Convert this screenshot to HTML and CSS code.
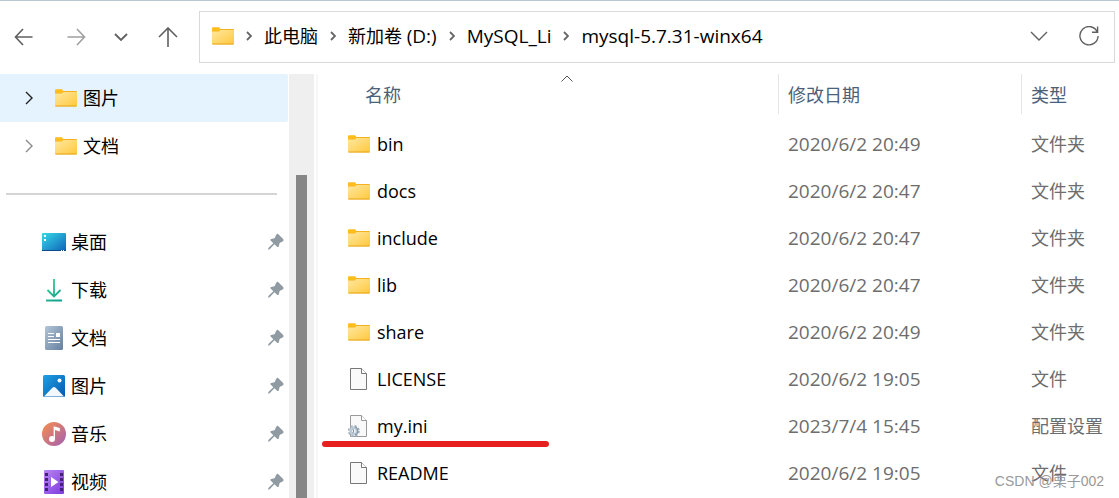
FILE: index.html
```html
<!DOCTYPE html>
<html lang="zh-CN">
<head>
    <meta charset="UTF-8">
    <meta name="viewport" content="width=device-width, initial-scale=1.0">
    <title>mysql-5.7.31-winx64</title>
    <link rel="stylesheet" href="styles.css">
</head>
<body>
    <!-- shared icons -->
    <svg class="defs" width="0" height="0" aria-hidden="true">
        <defs>
            <linearGradient id="g-folder" x1="0" y1="0" x2="1" y2="1">
                <stop offset="0" stop-color="#ffe8a0"/><stop offset="1" stop-color="#ffc83d"/>
            </linearGradient>
            <linearGradient id="g-desktop" x1="0" y1="0" x2="1" y2="1">
                <stop offset="0" stop-color="#36dbe8"/><stop offset="1" stop-color="#0f62b8"/>
            </linearGradient>
            <linearGradient id="g-download" x1="0" y1="0" x2="1" y2="1" gradientUnits="userSpaceOnUse" gradientTransform="scale(24)">
                <stop offset="0.2" stop-color="#33d08c"/><stop offset="1" stop-color="#0a9396"/>
            </linearGradient>
            <linearGradient id="g-doc" x1="0" y1="0" x2="1" y2="1">
                <stop offset="0" stop-color="#b3c5d8"/><stop offset="1" stop-color="#64809f"/>
            </linearGradient>
            <linearGradient id="g-picture" x1="0" y1="0" x2="1" y2="1">
                <stop offset="0" stop-color="#1fa0e4"/><stop offset="1" stop-color="#0558ae"/>
            </linearGradient>
            <linearGradient id="g-music" x1="0" y1="0" x2="1" y2="1">
                <stop offset="0.1" stop-color="#f08a54"/><stop offset="1" stop-color="#a25fb4"/>
            </linearGradient>
            <linearGradient id="g-video" x1="0" y1="0" x2="1" y2="1">
                <stop offset="0" stop-color="#b884f6"/><stop offset="1" stop-color="#7f3ade"/>
            </linearGradient>
        </defs>
        <symbol id="i-folder" viewBox="0 0 22 18">
            <path d="M0 1.5Q0 .5 1 .5H6.5L8.2 2H21Q22 2 22 3V9H0z" fill="#f3b021"/>
            <path d="M0 1.5Q0 .5 1 .5H7Q8 .5 8 1.5V4H0z" fill="#ffbd1c"/>
            <path d="M0 4.4H7L8.3 3H22V16.6Q22 17.4 21.2 17.4H.8Q0 17.4 0 16.6z" fill="url(#g-folder)"/>
            <path d="M.4 17H21.6" stroke="#e8a41c" stroke-width="1"/>
        </symbol>
        <symbol id="i-file" viewBox="0 0 22 24">
            <path d="M2.5 1.5H13.5L18.5 6.5V22.5H2.5z" fill="#f9f9f9" stroke="#777"/>
            <path d="M13.5 1.5V6.5H18.5" fill="#fff" stroke="#777"/>
        </symbol>
        <symbol id="i-ini" viewBox="0 0 22 24">
            <path d="M2.5 1.5H13.5L18.5 6.5V22.5H2.5z" fill="#f9f9f9" stroke="#9a9a9a"/>
            <path d="M13.5 1.5V6.5H18.5" fill="#fff" stroke="#9a9a9a"/>
            <circle cx="5.8" cy="17" r="5" fill="none" stroke="#a3b3c0" stroke-width="2" stroke-dasharray="2.2 1.73"/>
            <circle cx="5.8" cy="17" r="3.2" fill="#f4f7f9" stroke="#bccbd7" stroke-width="2.6"/>
            <path d="M7 12.9Q9.8 14.4 9.8 17.2T7 21" fill="none" stroke="#8798a7" stroke-width="1.2"/>
            <path d="M4.8 15Q6.6 17 4.8 19.2" fill="none" stroke="#7c8b98" stroke-width="1"/>
        </symbol>
        <symbol id="i-right" viewBox="0 0 8 14">
            <path d="M1 1L7 7L1 13" fill="none" stroke="currentColor" stroke-width="1.4"/>
        </symbol>
        <symbol id="i-crumb" viewBox="0 0 6 10">
            <path d="M1 1L5 5L1 9" fill="none" stroke="currentColor" stroke-width="1.8"/>
        </symbol>
        <symbol id="i-pin" viewBox="0 0 18 18">
            <path d="M9.5 1.2Q10.6 .4 11.6 1.4L16.2 6Q17.2 7.2 16 8.2L12.6 10L11.8 13.4Q11.2 14.6 10.2 13.8L7.4 11.2L2.6 16.2L1 16.8L1.4 15L6.3 10.2L3.6 7.6Q2.8 6.6 4 6L7.6 5.2z" fill="#8f9aa2"/>
        </symbol>
    </svg>

    <div class="explorer">
        <header class="toolbar">
            <button class="nav" aria-label="后退">
                <svg width="20" height="18" viewBox="0 0 20 18"><path d="M9 1L1.5 9L9 17M1.5 9H18.5" fill="none" stroke="currentColor" stroke-width="1.6"/></svg>
            </button>
            <button class="nav nav-forward" aria-label="前进">
                <svg width="20" height="18" viewBox="0 0 20 18"><path d="M10 1L17.5 9L10 17M17.5 9H.5" fill="none" stroke="currentColor" stroke-width="1.6"/></svg>
            </button>
            <button class="nav nav-recent" aria-label="最近浏览的位置">
                <svg width="14" height="8" viewBox="0 0 14 8"><path d="M1 1L7 7L13 1" fill="none" stroke="currentColor" stroke-width="1.8"/></svg>
            </button>
            <button class="nav nav-up" aria-label="向上">
                <svg width="20" height="20" viewBox="0 0 20 20"><path d="M1 10L10 1L19 10M10 1V20" fill="none" stroke="currentColor" stroke-width="1.6"/></svg>
            </button>
            <nav class="address" aria-label="地址">
                <svg class="folder"><use href="#i-folder"/></svg>
                <svg class="crumb-arrow"><use href="#i-crumb"/></svg>
                <a href="#">此电脑</a>
                <svg class="crumb-arrow"><use href="#i-crumb"/></svg>
                <a href="#">新加卷 <span class="latin">(D:)</span></a>
                <svg class="crumb-arrow"><use href="#i-crumb"/></svg>
                <a class="latin" href="#">MySQL_Li</a>
                <svg class="crumb-arrow"><use href="#i-crumb"/></svg>
                <a class="latin" href="#">mysql-5.7.31-winx64</a>
                <div class="address-actions">
                    <button class="nav" aria-label="展开">
                        <svg width="18" height="10" viewBox="0 0 18 10"><path d="M1 1L9 9L17 1" fill="none" stroke="currentColor" stroke-width="1.4"/></svg>
                    </button>
                    <button class="nav" aria-label="刷新">
                        <svg width="20" height="20" viewBox="0 0 20 20"><path d="M18.4 6.2A9.1 9.1 0 1 0 19.1 10M18.6 .6V6.2H13" fill="none" stroke="currentColor" stroke-width="1.4"/></svg>
                    </button>
                </div>
            </nav>
        </header>

        <div class="content">
            <aside class="sidebar">
                <div class="tree">
                    <a class="tree-item selected" href="#">
                        <svg class="expand"><use href="#i-right"/></svg>
                        <svg class="folder"><use href="#i-folder"/></svg>
                        <span>图片</span>
                    </a>
                    <a class="tree-item" href="#">
                        <svg class="expand"><use href="#i-right"/></svg>
                        <svg class="folder"><use href="#i-folder"/></svg>
                        <span>文档</span>
                    </a>
                    <hr>
                    <a class="quick-item" href="#">
                        <svg class="place" viewBox="0 0 24 24">
                            <rect y="3" width="24" height="18" rx="1" fill="url(#g-desktop)"/>
                            <path d="M2 5h2v2H2zM2 9h2v2H2z" fill="#fff"/>
                            <path d="M0 20.5H24" stroke="#0a4b8c"/>
                            <path d="M19 20.5h1M21 20.5h1" stroke="#fff"/>
                        </svg>
                        <span>桌面</span>
                        <svg class="pin"><use href="#i-pin"/></svg>
                    </a>
                    <a class="quick-item" href="#">
                        <svg class="place" viewBox="0 0 24 24">
                            <path d="M12 1V18M5.5 12L12 18.5L18.5 12M4 22.5H20" fill="none" stroke="url(#g-download)" stroke-width="1.8"/>
                        </svg>
                        <span>下载</span>
                        <svg class="pin"><use href="#i-pin"/></svg>
                    </a>
                    <a class="quick-item" href="#">
                        <svg class="place" viewBox="0 0 24 24">
                            <rect x="3" width="18" height="24" rx="1.5" fill="url(#g-doc)"/>
                            <path d="M6 7.5H12M6 10.5H12M6 13.5H18M6 16.5H18" stroke="#fff" stroke-width="1.2"/>
                            <rect x="14" y="7" width="4" height="4" fill="#fff"/>
                        </svg>
                        <span>文档</span>
                        <svg class="pin"><use href="#i-pin"/></svg>
                    </a>
                    <a class="quick-item" href="#">
                        <svg class="place" viewBox="0 0 24 24">
                            <rect x="1" y="1" width="22" height="22" rx="1.5" fill="url(#g-picture)"/>
                            <path d="M2 22.4L10.6 13.6Q12 12.2 13.4 13.6L22 22.4z" fill="#f2f8fd"/>
                            <circle cx="17.5" cy="6.5" r="2" fill="#fff"/>
                        </svg>
                        <span>图片</span>
                        <svg class="pin"><use href="#i-pin"/></svg>
                    </a>
                    <a class="quick-item" href="#">
                        <svg class="place" viewBox="0 0 24 24">
                            <circle cx="12" cy="12" r="12" fill="url(#g-music)"/>
                            <circle cx="10" cy="17" r="3" fill="#fff"/>
                            <path d="M11.6 17V4.2L17.8 6V9.4L13 8V17z" fill="#fff"/>
                        </svg>
                        <span>音乐</span>
                        <svg class="pin"><use href="#i-pin"/></svg>
                    </a>
                    <a class="quick-item" href="#">
                        <svg class="place" viewBox="0 0 24 24">
                            <rect x="2" width="20" height="24" rx="1" fill="url(#g-video)"/>
                            <path d="M3 3h3v3H3zM3 8h3v3H3zM3 13h3v3H3zM3 18h3v3H3zM18 3h3v3h-3zM18 8h3v3h-3zM18 13h3v3h-3zM18 18h3v3h-3z" fill="#432474"/>
                            <path d="M9 7L16.5 12L9 17z" fill="#fff"/>
                        </svg>
                        <span>视频</span>
                        <svg class="pin"><use href="#i-pin"/></svg>
                    </a>
                </div>
                <div class="scrollbar"><div class="thumb"></div></div>
            </aside>

            <main class="files">
                <table>
                    <colgroup>
                        <col>
                        <col class="col-date">
                        <col class="col-type">
                    </colgroup>
                    <thead>
                        <tr>
                            <th class="th-name">
                                <button>名称
                                    <svg class="sort" viewBox="0 0 12 7"><path d="M.5 6.5L6 1L11.5 6.5" fill="none" stroke="#555"/></svg>
                                </button>
                            </th>
                            <th><button>修改日期</button></th>
                            <th><button>类型</button></th>
                        </tr>
                    </thead>
                    <tbody>
                        <tr>
                            <td><a href="#"><svg class="folder"><use href="#i-folder"/></svg>bin</a></td>
                            <td class="latin">2020/6/2 20:49</td>
                            <td>文件夹</td>
                        </tr>
                        <tr>
                            <td><a href="#"><svg class="folder"><use href="#i-folder"/></svg>docs</a></td>
                            <td class="latin">2020/6/2 20:47</td>
                            <td>文件夹</td>
                        </tr>
                        <tr>
                            <td><a href="#"><svg class="folder"><use href="#i-folder"/></svg>include</a></td>
                            <td class="latin">2020/6/2 20:47</td>
                            <td>文件夹</td>
                        </tr>
                        <tr>
                            <td><a href="#"><svg class="folder"><use href="#i-folder"/></svg>lib</a></td>
                            <td class="latin">2020/6/2 20:47</td>
                            <td>文件夹</td>
                        </tr>
                        <tr>
                            <td><a href="#"><svg class="folder"><use href="#i-folder"/></svg>share</a></td>
                            <td class="latin">2020/6/2 20:49</td>
                            <td>文件夹</td>
                        </tr>
                        <tr>
                            <td><a href="#"><svg class="file"><use href="#i-file"/></svg>LICENSE</a></td>
                            <td class="latin">2020/6/2 19:05</td>
                            <td>文件</td>
                        </tr>
                        <tr>
                            <td class="marked"><a href="#"><svg class="file"><use href="#i-ini"/></svg>my.ini</a></td>
                            <td class="latin">2023/7/4 15:45</td>
                            <td>配置设置</td>
                        </tr>
                        <tr>
                            <td><a href="#"><svg class="file"><use href="#i-file"/></svg>README</a></td>
                            <td class="latin">2020/6/2 19:05</td>
                            <td>文件</td>
                        </tr>
                    </tbody>
                </table>
            </main>
        </div>
        <div class="watermark">CSDN @栗子002</div>
    </div>
</body>
</html>
```
FILE: styles.css
```css
* {
    box-sizing: border-box;
}
body {
    margin: 0;
    background-color: #fff;
    color: #000;
    font-family: "Open Sans", "Noto Sans CJK SC", sans-serif;
    font-size: 18px;
    line-height: 24px;
}
a {
    color: inherit;
    text-decoration: none;
}
button {
    border: none;
    padding: 0;
    background: none;
    color: inherit;
    font: inherit;
    cursor: pointer;
}
svg {
    display: block;
    flex: none;
}
.defs {
    position: absolute;
}
.folder {
    width: 22px;
    height: 18px;
}
.file {
    width: 22px;
    height: 24px;
}
.latin {
    font-size: 19px;
}
.explorer {
    position: relative;
    display: flex;
    flex-direction: column;
    height: 100vh;
    overflow: hidden;
    border-top: 1px solid #b9c8d0;
}

/* toolbar */
.toolbar {
    display: flex;
    align-items: center;
    padding: 10px 4px 11px 0;
}
.nav {
    display: flex;
    align-items: center;
    justify-content: center;
    width: 48px;
    height: 50px;
    color: #606060;
}
.nav-forward {
    margin-left: 5px;
    color: #a0a0a0;
}
.nav-recent {
    width: 40px;
}
.nav-up {
    margin: 0 7px 0 3px;
}
.address {
    flex: 1;
    display: flex;
    align-items: center;
    gap: 12px;
    height: 52px;
    padding: 0 1px 2px 12px;
    border: 1px solid #d9d9d9;
    white-space: nowrap;
}
.crumb-arrow {
    width: 6px;
    height: 10px;
    color: #666;
}
.address-actions {
    display: flex;
    gap: 2px;
    margin-left: auto;
}

/* left pane */
.content {
    flex: 1;
    display: flex;
    min-height: 0;
}
.sidebar {
    flex: none;
    display: flex;
    width: 318px;
    border-right: 2px solid #f7f7f7;
}
.tree {
    width: 289px;
    padding-right: 1px;
    overflow: hidden;
}
.tree-item,
.quick-item {
    display: flex;
    align-items: center;
    height: 48px;
}
.tree-item {
    gap: 6px;
    padding-left: 25px;
    color: #000;
}
.tree-item.selected {
    border-radius: 0 2px 2px 0;
    background-color: #e5f3ff;
}
.expand {
    width: 8px;
    height: 14px;
    margin-right: 16px;
    color: #8a8a8a;
}
.selected .expand {
    color: #222;
}
.tree hr {
    height: 2px;
    margin: 23px 11px 23px 6px;
    border: none;
    background-color: #d5d5d5;
}
.quick-item {
    gap: 5px;
    padding: 0 3px 0 42px;
}
.place {
    width: 24px;
    height: 24px;
}
.pin {
    width: 18px;
    height: 18px;
    margin-left: auto;
}
.scrollbar {
    width: 25px;
    padding: 101px 7px 0;
    background-color: #efefef;
}
.thumb {
    height: 100%;
    background-color: #868686;
}

/* file list */
.files {
    flex: 1;
    min-width: 0;
}
table {
    width: 100%;
    table-layout: fixed;
    border-collapse: collapse;
}
.col-date {
    width: 243px;
}
.col-type {
    width: 98px;
}
th {
    height: 46px;
    padding: 0;
    color: #4c607a;
    font-weight: normal;
    text-align: left;
    vertical-align: top;
}
th button {
    position: relative;
    display: block;
    width: 100%;
    height: 40px;
    padding: 2px 0 0 9px;
    border-left: 1px solid #e5e5e5;
    text-align: left;
}
.th-name {
    padding-left: 37px;
}
.th-name button {
    border-left-color: transparent;
}
.sort {
    position: absolute;
    top: 1px;
    left: 50%;
    width: 12px;
    height: 7px;
    margin-left: -6px;
}
td {
    height: 47px;
    padding: 0 0 0 10px;
    color: #6d6d6d;
    white-space: nowrap;
}
td:first-child {
    padding-left: 30px;
    color: #000;
}
td a {
    display: flex;
    align-items: center;
    gap: 7px;
}
.marked {
    position: relative;
}
.marked::after {
    content: "";
    position: absolute;
    left: 4px;
    bottom: 2px;
    width: 227px;
    height: 6px;
    border-radius: 3px;
    background-color: #e81f1f;
}
.watermark {
    position: absolute;
    right: 15px;
    bottom: 5px;
    color: #999;
    font-family: "Liberation Sans", "Noto Sans CJK SC", sans-serif;
    font-size: 14px;
}
```
